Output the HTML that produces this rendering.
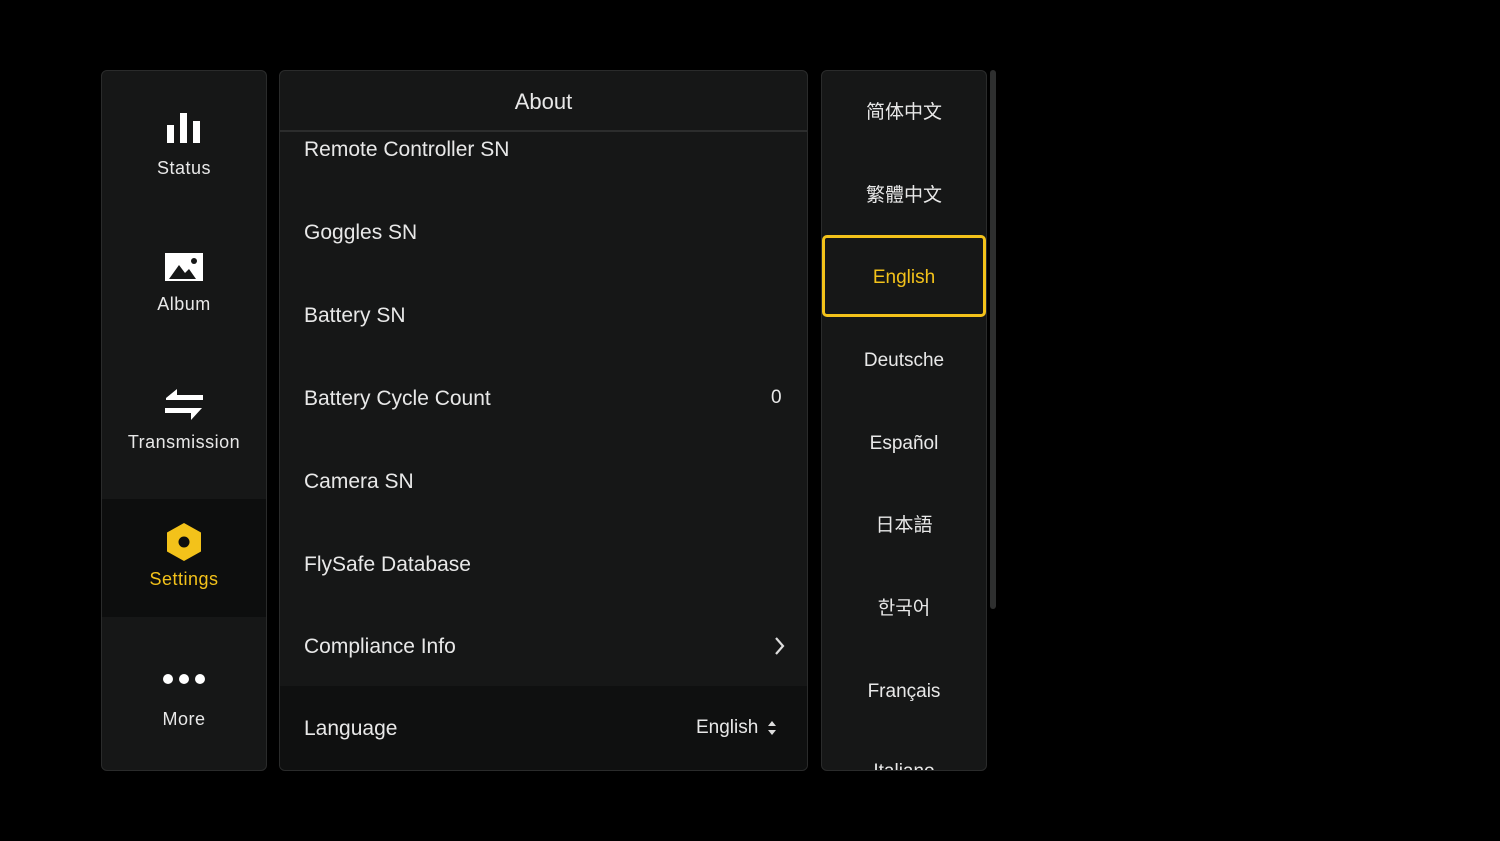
<!DOCTYPE html>
<html><head><meta charset="utf-8"><style>
*{margin:0;padding:0;box-sizing:border-box}
body{width:1500px;height:841px;background:#000;overflow:hidden;position:relative;font-family:"Liberation Sans","Noto Sans CJK SC",sans-serif;color:#e8e8e8}
.panel{position:absolute;background:#161717;border:1px solid #2a2b2b;border-radius:6px;overflow:hidden}
.nav{left:101px;top:70px;width:166px;height:701px}
.ni{position:absolute;left:0;width:100%;text-align:center;font-size:18px;letter-spacing:.5px}
.ni svg{display:block;margin:0 auto}
.mid{left:279px;top:70px;width:529px;height:701px}
.hdr{position:absolute;left:0;top:0;width:100%;height:61px;border-bottom:2px solid #2c2d2d;text-align:center;line-height:62px;font-size:22px}
.row{position:absolute;left:24px;font-size:21px;line-height:24px}
.val{position:absolute;font-size:19px}
.right{left:821px;top:70px;width:166px;height:701px}
.li{position:absolute;left:0;width:100%;text-align:center;font-size:19px;line-height:24px}
</style></head><body>
<div class="panel nav">
  <div class="ni" style="top:40px"><svg width="36" height="36" viewBox="0 0 36 36"><rect x="1" y="14" width="7" height="18" fill="#fff"/><rect x="14" y="2" width="7" height="30" fill="#fff"/><rect x="27" y="10" width="7" height="22" fill="#fff"/></svg><div style="margin-top:11px">Status</div></div>
  <div class="ni" style="top:181px"><svg width="40" height="30" viewBox="0 0 40 30"><rect x="1" y="1" width="38" height="28" fill="#fff"/><path d="M5 27 L15 13 L21 21 L25 17 L32 27 Z" fill="#161717"/><circle cx="30" cy="9" r="3" fill="#161717"/></svg><div style="margin-top:12px">Album</div></div>
  <div class="ni" style="top:316px"><svg width="40" height="36" viewBox="0 0 40 36"><path d="M2 11 L13 2 L13 8 L39 8 L39 13 L2 13 Z" fill="#fff"/><path d="M1 21 L38 21 L27 33 L27 26 L1 26 Z" fill="#fff"/></svg><div style="margin-top:9px">Transmission</div></div>
  <div style="position:absolute;left:0;top:428px;width:100%;height:118px;background:#0d0e0e"></div>
  <div class="ni" style="top:451px;color:#f3c21a"><svg width="36" height="40" viewBox="0 0 36 40"><path d="M18 1 L35 10.5 L35 29.5 L18 39 L1 29.5 L1 10.5 Z" fill="#f3c21a"/><circle cx="18" cy="20" r="5.5" fill="#0d0e0e"/></svg><div style="margin-top:7px">Settings</div></div>
  <div class="ni" style="top:601px"><svg width="44" height="14" viewBox="0 0 44 14"><circle cx="6" cy="7" r="5" fill="#fff"/><circle cx="22" cy="7" r="5" fill="#fff"/><circle cx="38" cy="7" r="5" fill="#fff"/></svg><div style="margin-top:23px">More</div></div>
</div>
<div class="panel mid">
  <div class="hdr">About</div>
  <div class="row" style="top:67px">Remote Controller SN</div>
  <div class="row" style="top:150px">Goggles SN</div>
  <div class="row" style="top:233px">Battery SN</div>
  <div class="row" style="top:316px">Battery Cycle Count</div>
  <div class="val" style="left:491px;top:316px">0</div>
  <div class="row" style="top:399px">Camera SN</div>
  <div class="row" style="top:482px">FlySafe Database</div>
  <div class="row" style="top:564px">Compliance Info</div>
  <svg style="position:absolute;left:493px;top:564px" width="14" height="22" viewBox="0 0 14 22"><path d="M3 3 L10 11 L3 19" stroke="#ddd" stroke-width="2.2" fill="none"/></svg>
  <div style="position:absolute;left:0;top:615px;width:100%;height:86px;background:#0f1010"></div>
  <div class="row" style="top:646px">Language</div>
  <div class="val" style="left:416px;top:646px">English</div>
  <svg style="position:absolute;left:486px;top:648px" width="12" height="18" viewBox="0 0 12 18"><path d="M2 7 L6 2 L10 7 Z M2 11 L6 16 L10 11 Z" fill="#ddd"/></svg>
</div>
<div class="panel right">
  <div class="li" style="top:30px">简体中文</div>
  <div class="li" style="top:113px">繁體中文</div>
  <div style="position:absolute;left:0;top:164px;width:164px;height:82px;border:3px solid #f3c21a;border-radius:5px"></div>
  <div class="li" style="top:195px;color:#f3c21a">English</div>
  <div class="li" style="top:278px">Deutsche</div>
  <div class="li" style="top:361px">Español</div>
  <div class="li" style="top:443px">日本語</div>
  <div class="li" style="top:526px">한국어</div>
  <div class="li" style="top:609px">Français</div>
  <div class="li" style="top:689px">Italiano</div>
</div>
<div style="position:absolute;left:990px;top:70px;width:6px;height:539px;background:#2e2f2f;border-radius:3px"></div>
</body></html>
